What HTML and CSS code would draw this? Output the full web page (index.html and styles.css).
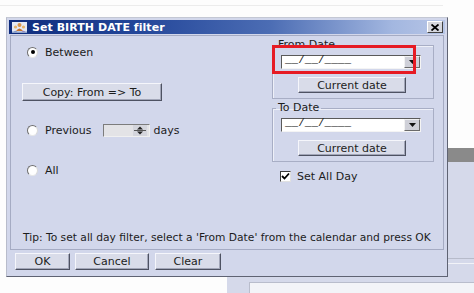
FILE: index.html
```html
<!DOCTYPE html>
<html lang="en">
<head>
    <meta charset="UTF-8">
    <meta name="viewport" content="width=device-width, initial-scale=1.0">
    <title>Set BIRTH DATE filter</title>
    <link rel="stylesheet" href="styles.css">
</head>
<body>
    <div class="desktop">
        <div class="topline"></div>
        <div class="bgwin bgwin-right"><div class="bgwin-line"></div></div>
        <div class="bgwin bgwin-bottom"><div class="bgwin-inner"></div></div>

        <div class="dialog">
            <div class="titlebar">
                <svg class="app-icon" width="15" height="11" viewBox="0 0 15 11">
                    <rect x="0" y="0" width="15" height="11" fill="#e4eaf5"/>
                    <circle cx="7.5" cy="3" r="2" fill="#d9954a"/>
                    <path d="M4 9 Q7.5 4 11 9 Z" fill="#c8742e"/>
                    <circle cx="3.5" cy="5" r="1.6" fill="#e6b36a"/>
                    <path d="M1 11 Q3.5 6.5 6 11 Z" fill="#7b8fc0"/>
                    <circle cx="11.5" cy="5" r="1.6" fill="#e6b36a"/>
                    <path d="M9 11 Q11.5 6.5 14 11 Z" fill="#9a6ab0"/>
                    <rect x="0" y="9.5" width="15" height="1.5" fill="#8fa3cc"/>
                </svg>
                <span class="title">Set BIRTH DATE filter</span>
                <div class="close">
                    <svg width="8" height="7" viewBox="0 0 8 7">
                        <path d="M0.5 0.5 L7.5 6.5 M7.5 0.5 L0.5 6.5" stroke="#000" stroke-width="1.8"/>
                    </svg>
                </div>
            </div>

            <div class="panel">
                <div class="cols">
                    <div class="left">
                        <div class="radio-row row-between">
                            <span class="radio checked"></span>
                            <span>Between</span>
                        </div>
                        <div class="btn copy-btn">Copy: From =&gt; To</div>
                        <div class="radio-row row-previous">
                            <span class="radio"></span>
                            <span>Previous</span>
                            <div class="spinner">
                                <div class="spinner-field"></div>
                                <div class="spinner-arrows">
                                    <svg width="14" height="11" viewBox="0 0 14 11">
                                        <path d="M4 4.5 L7 1.5 L10 4.5 Z" fill="#222"/>
                                        <line x1="1" y1="5.5" x2="13" y2="5.5" stroke="#555"/>
                                        <path d="M4 6.5 L7 9.5 L10 6.5 Z" fill="#222"/>
                                    </svg>
                                </div>
                            </div>
                            <span class="days">days</span>
                        </div>
                        <div class="radio-row row-all">
                            <span class="radio"></span>
                            <span>All</span>
                        </div>
                    </div>

                    <div class="right">
                        <fieldset class="date-group">
                            <legend>From Date</legend>
                            <div class="combo">
                                <div class="combo-field">__/__/____</div>
                                <div class="combo-btn">
                                    <svg width="7" height="4" viewBox="0 0 7 4"><path d="M0 0 L7 0 L3.5 4 Z" fill="#111"/></svg>
                                </div>
                            </div>
                            <div class="btn date-btn">Current date</div>
                        </fieldset>
                        <fieldset class="date-group">
                            <legend>To Date</legend>
                            <div class="combo">
                                <div class="combo-field">__/__/____</div>
                                <div class="combo-btn">
                                    <svg width="7" height="4" viewBox="0 0 7 4"><path d="M0 0 L7 0 L3.5 4 Z" fill="#111"/></svg>
                                </div>
                            </div>
                            <div class="btn date-btn">Current date</div>
                        </fieldset>
                        <div class="check-row">
                            <span class="checkbox">
                                <svg width="9" height="9" viewBox="0 0 9 9"><path d="M1 4 L3.5 6.5 L8 1.5" stroke="#000" stroke-width="1.8" fill="none"/></svg>
                            </span>
                            <span>Set All Day</span>
                        </div>
                        <div class="highlight"></div>
                    </div>
                </div>
                <div class="tip">Tip: To set all day filter, select a 'From Date' from the calendar and press OK</div>
            </div>

            <div class="buttons">
                <div class="btn btn-ok">OK</div>
                <div class="btn btn-cancel">Cancel</div>
                <div class="btn btn-clear">Clear</div>
            </div>
        </div>
    </div>
</body>
</html>
```

FILE: styles.css
```css
body {
    margin: 0;
    background-color: #fdfdfd;
    font-family: "DejaVu Sans", Verdana, sans-serif;
    font-size: 11px;
    color: #1c1c1c;
}
.desktop {
    position: relative;
    width: 474px;
    height: 293px;
    overflow: hidden;
    padding: 17px 0 0 6px;
    box-sizing: border-box;
}
.topline {
    position: absolute;
    left: 0;
    top: 5px;
    width: 443px;
    height: 1px;
    background-color: #ececec;
}
.bgwin {
    position: absolute;
    background-color: #d5d9ea;
}
.bgwin-right {
    left: 447px;
    top: 148px;
    width: 40px;
    height: 150px;
    border-top: 14px solid #8a8a8a;
    border-left: 1px solid #b0b4c4;
}
.bgwin-line {
    margin-top: 96px;
    height: 4px;
    border-top: 1px solid #b7bbca;
    border-bottom: 1px solid #f2f3f8;
}
.bgwin-bottom {
    left: 227px;
    top: 276px;
    width: 260px;
    height: 20px;
}
.bgwin-inner {
    margin: 6px 0 0 22px;
    height: 20px;
    background-color: #f3f4f8;
    border-top: 1px solid #b9bdcc;
    border-left: 1px solid #b9bdcc;
}

.dialog {
    position: relative;
    z-index: 1;
    width: 442px;
    height: 260px;
    box-sizing: border-box;
    border: 1px solid #5f6373;
    border-top-color: #c4c8d4;
    border-left-color: #b8bccb;
    padding: 2px;
    background-color: #d2d7eb;
    display: flex;
    flex-direction: column;
}
.titlebar {
    height: 14px;
    display: flex;
    align-items: center;
    padding: 0 2px 0 3px;
    background: linear-gradient(90deg, #0d2b7c 0%, #24479a 30%, #4c6db4 60%, #a3b7e0 88%, #b7c5e6 100%);
    color: #fff;
    font-weight: bold;
}
.app-icon {
    flex: none;
}
.title {
    margin-left: 5px;
    flex: 1;
    letter-spacing: 0.05px;
}
.close {
    width: 16px;
    height: 12px;
    box-sizing: border-box;
    display: flex;
    align-items: center;
    justify-content: center;
    background-color: #d6d7de;
    border: 1px solid;
    border-color: #fff #404040 #404040 #fff;
}

.panel {
    height: 215px;
    margin: 1px 1px 0;
    box-sizing: border-box;
    border: 1px solid #a5abc3;
    display: flex;
    flex-direction: column;
}
.cols {
    display: grid;
    grid-template-columns: 261px 162px;
}
.left {
    padding-left: 11px;
}
.radio-row {
    display: flex;
    align-items: center;
    margin-left: 5px;
    height: 12px;
}
.radio {
    width: 11px;
    height: 11px;
    box-sizing: border-box;
    border-radius: 50%;
    background-color: #fff;
    border: 1px solid;
    border-color: #6e6e6e #d8d8d8 #e8e8e8 #6e6e6e;
    margin-right: 7px;
    display: flex;
    align-items: center;
    justify-content: center;
}
.radio.checked::after {
    content: "";
    width: 4px;
    height: 4px;
    border-radius: 50%;
    background-color: #000;
}
.row-between {
    margin-top: 10px;
}
.copy-btn {
    margin-top: 25px;
    width: 140px;
    height: 18px;
}
.row-previous {
    margin-top: 23px;
    height: 13px;
}
.spinner {
    margin-left: 11px;
    width: 47px;
    height: 13px;
    box-sizing: border-box;
    display: flex;
    border: 1px solid;
    border-color: #7c7c7c #f0f0f0 #f0f0f0 #7c7c7c;
    background-color: #e3e3e6;
}
.spinner-field {
    flex: 1;
}
.spinner-arrows {
    width: 14px;
    margin-right: 2px;
    display: flex;
    align-items: center;
    background-color: #d4d5dc;
}
.days {
    margin-left: 4px;
}
.row-all {
    margin-top: 27px;
}

.right {
    position: relative;
}
.date-group {
    margin: 3px 0 0;
    padding: 4px 0 5px 8px;
    width: 162px;
    height: 60px;
    box-sizing: border-box;
    border: 1px solid #a8aec5;
    box-shadow: inset 1px 1px 0 #eef0f8;
}
.date-group legend {
    margin-left: -5px;
    padding: 0 2px;
    line-height: 12px;
}
.combo {
    width: 140px;
    height: 14px;
    box-sizing: border-box;
    display: flex;
    border: 1px solid;
    border-color: #5a5a5a #f4f4f4 #f4f4f4 #5a5a5a;
    background-color: #fff;
}
.combo-field {
    flex: 1;
    padding-left: 3px;
    font-family: "Liberation Mono", monospace;
    font-size: 11px;
    line-height: 9px;
    color: #222;
}
.combo-btn {
    width: 16px;
    box-sizing: border-box;
    display: flex;
    align-items: center;
    justify-content: center;
    background-color: #cfd0d8;
    border: 1px solid;
    border-color: #f2f2f2 #6a6a6a #6a6a6a #f2f2f2;
}
.date-btn {
    margin: 8px 0 0 17px;
    width: 108px;
    height: 16px;
}
.check-row {
    display: flex;
    align-items: center;
    margin: 9px 0 0 8px;
    height: 11px;
}
.checkbox {
    width: 11px;
    height: 11px;
    box-sizing: border-box;
    background-color: #fff;
    border: 1px solid;
    border-color: #3a3a3a #e0e0e0 #e0e0e0 #3a3a3a;
    margin-right: 6px;
    display: flex;
    align-items: center;
    justify-content: center;
}
.highlight {
    position: absolute;
    left: 0;
    top: 9px;
    width: 144px;
    height: 29px;
    box-sizing: border-box;
    border: 3px solid #e61b24;
}
.tip {
    margin: auto 0 5px 12px;
    line-height: 12px;
    font-size: 10.7px;
}

.btn {
    box-sizing: border-box;
    display: flex;
    align-items: center;
    justify-content: center;
    background-color: #d9dce9;
    border: 1px solid;
    border-color: #f5f6fb #4e5262 #4e5262 #f5f6fb;
    box-shadow: inset -1px -1px 0 #a2a6b8;
}
.buttons {
    display: flex;
    padding: 3px 0 0 6px;
}
.buttons .btn {
    height: 17px;
}
.btn-ok {
    width: 55px;
}
.btn-cancel {
    width: 74px;
    margin-left: 5px;
}
.btn-clear {
    width: 66px;
    margin-left: 6px;
}
```
